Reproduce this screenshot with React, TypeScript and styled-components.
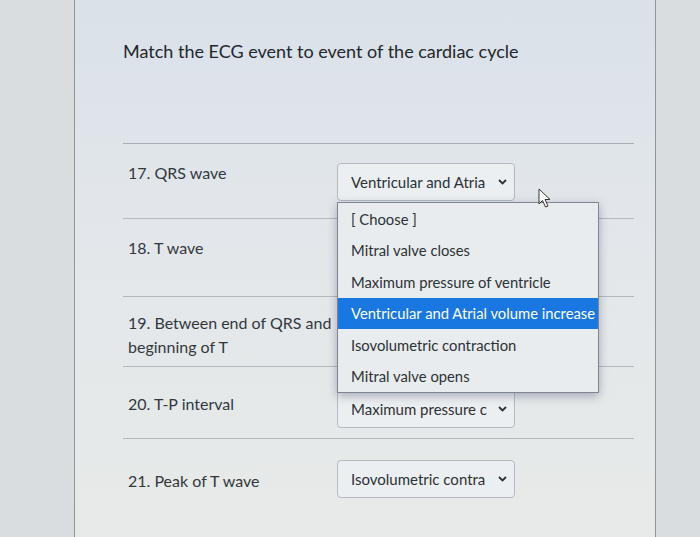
import React from "react";
import styled, { createGlobalStyle } from "styled-components";

const GlobalStyle = createGlobalStyle`
  html, body {
    margin: 0;
    padding: 0;
    background: #d9dde0;
    font-family: Lato, "Open Sans", "Liberation Sans", sans-serif;
  }
`;

const Page = styled.div`
  display: flex;
  min-height: 537px;
  overflow: hidden;
`;

const Card = styled.div`
  box-sizing: border-box;
  margin-left: 74px;
  width: 582px;
  min-height: 537px;
  padding: 0 21px 0 48px;
  border-left: 1px solid #8f959b;
  border-right: 1px solid #8f959b;
  background: linear-gradient(180deg, #dae1e9 0%, #e3e7eb 45%, #e7eae8 100%);
`;

const QuestionText = styled.div`
  box-sizing: border-box;
  height: 144px;
  padding-top: 39px;
  font-size: 18px;
  line-height: 24px;
  color: #22272c;
  border-bottom: 1px solid #a8aeb4;
`;

const Row = styled.div<{ $last?: boolean; $top: number; $bottom: number }>`
  position: relative;
  display: flex;
  align-items: flex-start;
  padding: ${(p) => p.$top}px 0 ${(p) => p.$bottom}px 5px;
  border-bottom: ${(p) => (p.$last ? "none" : "1px solid #b3b9bf")};
`;

const Label = styled.div<{ $shift: number }>`
  width: 209px;
  margin: ${(p) => p.$shift}px 0 -10px;
  font-size: 16px;
  line-height: 24px;
  color: #33383d;
`;

const SelectWrap = styled.div`
  position: relative;
`;

const SelectBox = styled.div`
  box-sizing: border-box;
  display: flex;
  align-items: center;
  justify-content: space-between;
  width: 178px;
  height: 38px;
  padding: 0 7px 0 13px;
  border: 1px solid #b4bac0;
  border-radius: 4px;
  background: #eceff1;
  font-size: 15px;
  color: #2c3136;
`;

const SelectValue = styled.span`
  white-space: nowrap;
  overflow: hidden;
  max-width: 138px;
`;

const Chevron = styled.svg`
  flex: none;
  width: 9px;
  height: 6px;
`;

const DropList = styled.ul`
  position: absolute;
  z-index: 5;
  top: 39px;
  left: 0;
  box-sizing: border-box;
  width: 262px;
  margin: 0;
  padding: 0;
  list-style: none;
  border: 1px solid #7f868d;
  background: #e9ecee;
  box-shadow: 0 3px 9px rgba(40, 50, 90, 0.35);
`;

const Option = styled.li<{ $active?: boolean }>`
  height: 31.5px;
  display: flex;
  align-items: center;
  padding-left: 13px;
  font-size: 14.8px;
  white-space: nowrap;
  color: ${(p) => (p.$active ? "#ffffff" : "#2c3136")};
  background: ${(p) => (p.$active ? "#1877e0" : "transparent")};
`;

const Cursor = styled.svg`
  position: absolute;
  z-index: 6;
  left: 201px;
  top: 25px;
  width: 14px;
  height: 20px;
`;

const options = [
  "[ Choose ]",
  "Mitral valve closes",
  "Maximum pressure of ventricle",
  "Ventricular and Atrial volume increase",
  "Isovolumetric contraction",
  "Mitral valve opens",
];

const rows = [
  { label: "17. QRS wave", value: "Ventricular and Atria", open: true, top: 19, bottom: 17, shift: -2 },
  { label: "18. T wave", value: "", top: 19, bottom: 20, shift: -2 },
  { label: "19. Between end of QRS and beginning of T", value: "", top: 19, bottom: 12, shift: -5 },
  { label: "20. T-P interval", value: "Maximum pressure c", top: 23, bottom: 10, shift: 2 },
  { label: "21. Peak of T wave", value: "Isovolumetric contra", top: 21, bottom: 20, shift: 9 },
];

function Select({ value, open }: { value: string; open?: boolean }) {
  return (
    <SelectWrap>
      <SelectBox>
        <SelectValue>{value}</SelectValue>
        <Chevron viewBox="0 0 9 6">
          <polyline points="1,1 4.5,4.5 8,1" fill="none" stroke="#2c3136" strokeWidth="1.8" />
        </Chevron>
      </SelectBox>
      {open && (
        <>
          <Cursor viewBox="0 0 14 20">
            <path d="M1 1 L1 16 L4.5 12.5 L7.5 19 L10 18 L7 11.5 L12 11.5 Z" fill="#ffffff" stroke="#333" strokeWidth="1" />
          </Cursor>
          <DropList>
            {options.map((o, i) => (
              <Option key={o} $active={i === 3}>{o}</Option>
            ))}
          </DropList>
        </>
      )}
    </SelectWrap>
  );
}

export default function App() {
  return (
    <Page>
      <GlobalStyle />
      <Card>
        <QuestionText>Match the ECG event to event of the cardiac cycle</QuestionText>
        {rows.map((r, i) => (
          <Row key={r.label} $last={i === rows.length - 1} $top={r.top} $bottom={r.bottom}>
            <Label $shift={r.shift}>{r.label}</Label>
            <Select value={r.value} open={r.open} />
          </Row>
        ))}
      </Card>
    </Page>
  );
}
